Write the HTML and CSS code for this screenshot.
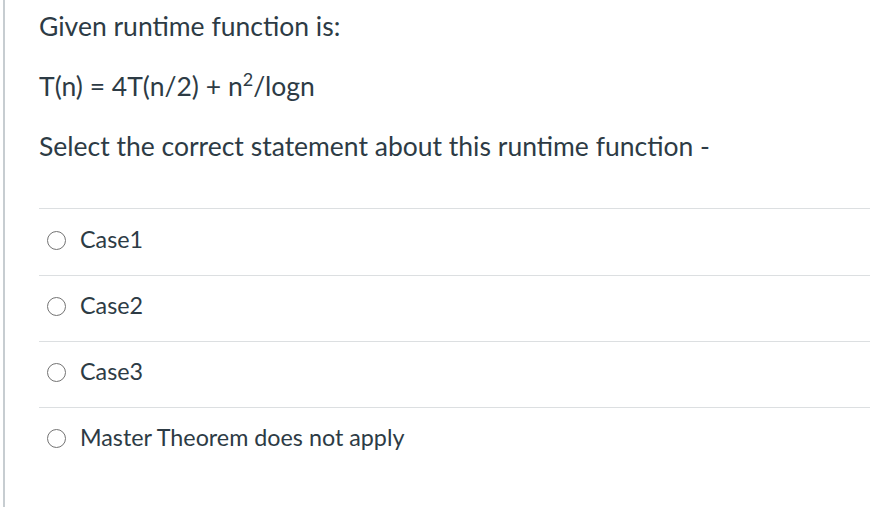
FILE: index.html
```html
<!DOCTYPE html>
<html>
<head>
<meta charset="utf-8">
<link rel="stylesheet" href="styles.css">
</head>
<body>
<div class="question">
  <div class="text">
    <p>Given runtime function is:</p>
    <p>T(n) = 4T(n/2) + n<sup>2</sup>/logn</p>
    <p>Select the correct statement about this runtime function -</p>
  </div>
  <div class="answers">
    <label class="answer"><span class="radio"></span><span class="label">Case1</span></label>
    <label class="answer"><span class="radio"></span><span class="label">Case2</span></label>
    <label class="answer"><span class="radio"></span><span class="label">Case3</span></label>
    <label class="answer"><span class="radio"></span><span class="label">Master Theorem does not apply</span></label>
  </div>
</div>
</body>
</html>
```
FILE: styles.css
```css
html, body {
  margin: 0;
  padding: 0;
  background: #ffffff;
}
body {
  font-family: Lato, "Open Sans", sans-serif;
  color: #2d3b45;
  width: 870px;
  height: 507px;
  overflow: hidden;
}
.question {
  margin-left: 3px;
  border-left: 2px solid #c7cdd1;
  padding-left: 34px;
  height: 507px;
  box-sizing: border-box;
  padding-top: 8px;
}
.text p {
  margin: 0 0 24px 0;
  font-size: 26.5px;
  line-height: 36px;
}
.text p:last-child {
  margin-bottom: 0;
}
.text sup {
  font-size: 18px;
  line-height: 0;
  vertical-align: 0;
  position: relative;
  top: -10px;
}
.answers {
  margin-top: 44px;
}
.answer {
  display: flex;
  align-items: center;
  height: 66px;
  border-top: 1px solid #dcdfe1;
  box-sizing: border-box;
  padding-bottom: 4px;
}
.answer:first-child {
  height: 67px;
}
.radio {
  width: 17px;
  height: 17px;
  border: 1.8px solid #737373;
  border-radius: 50%;
  margin-left: 8px;
  margin-right: 14px;
  flex: none;
}
.label {
  font-size: 23.3px;
  line-height: 32px;
  margin-bottom: 3px;
}
```
